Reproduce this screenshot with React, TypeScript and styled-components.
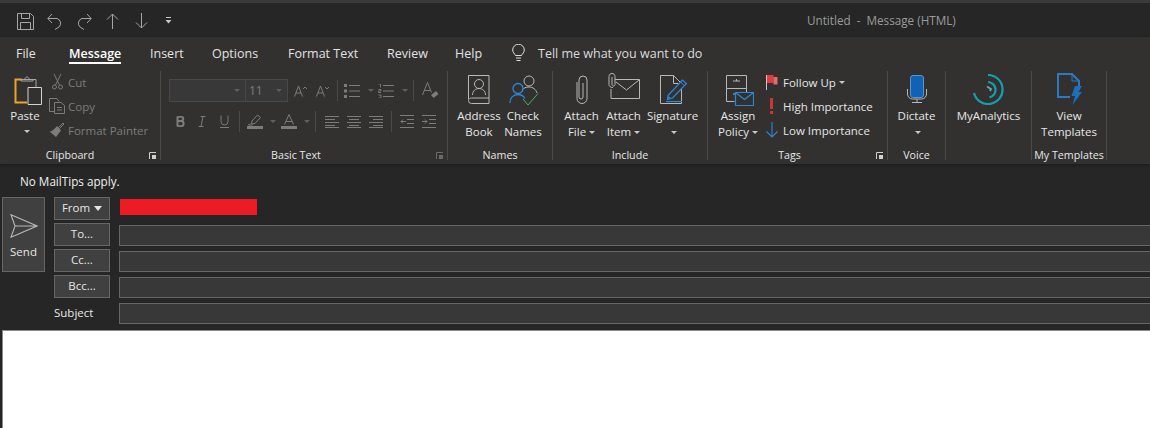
import React from "react";
import styled, { createGlobalStyle } from "styled-components";

const GlobalStyle = createGlobalStyle`
  html, body {
    margin: 0;
    padding: 0;
    height: 100%;
    overflow: hidden;
    background: #262626;
  }
  body {
    font-family: "Open Sans", "Noto Sans", "Liberation Sans", sans-serif;
    font-size: 11.5px;
    color: #e6e6e6;
  }
  * { box-sizing: border-box; }
`;

const stroke = "#b8b8b8";
const dim = "#7c7c7c";
const blue = "#2b88d8";

function Svg({ w, h, children }: { w: number; h: number; children: React.ReactNode }) {
  return (
    <svg width={w} height={h} viewBox={`0 0 ${w} ${h}`} fill="none" style={{ display: "block", flex: "none" }}>
      {children}
    </svg>
  );
}

const SaveIcon = () => (
  <Svg w={17} h={17}>
    <path d="M.5.5h13l3 3v13H.5z" stroke="#a6a6a6" />
    <path d="M4.500.5v5h8v-5M3.500 16.500v-7h10v7" stroke="#a6a6a6" />
  </Svg>
);
const UndoIcon = () => (
  <Svg w={16} h={17}>
    <path d="M1 5.500h9a5 5 0 0 1 2 8.500l-4 2.500" stroke="#a6a6a6" />
    <path d="M5 1 .8 5.500 5 10" stroke="#a6a6a6" />
  </Svg>
);
const RedoIcon = () => (
  <Svg w={16} h={17}>
    <path d="M15 5.500H6a5 5 0 0 0-2 8.500l4 2.500" stroke="#a6a6a6" />
    <path d="M11 1l4.200 4.500L11 10" stroke="#a6a6a6" />
  </Svg>
);
const UpIcon = () => (
  <Svg w={13} h={16}>
    <path d="M6.500 16V1M1 6.500 6.500 1 12 6.500" stroke="#a6a6a6" />
  </Svg>
);
const DownIcon = () => (
  <Svg w={13} h={16}>
    <path d="M6.500 0v15M1 9.500 6.500 15 12 9.500" stroke="#a6a6a6" />
  </Svg>
);
const CustomizeIcon = () => (
  <Svg w={7} h={8}>
    <path d="M1 .5h5" stroke="#c8c8c8" />
    <path d="M.5 3h6L3.500 6.500z" fill="#c8c8c8" />
  </Svg>
);
const BulbIcon = () => (
  <Svg w={13} h={18}>
    <path d="M3.500 11.500C2.500 9.500.7 8.500.7 6A5.800 5.800 0 0 1 12.300 6c0 2.500-1.800 3.500-2.800 5.500z" stroke="#e0e0e0" />
    <path d="M4 14h5M4.500 16.500h4" stroke="#e0e0e0" />
  </Svg>
);
const PasteIcon = () => (
  <Svg w={28} h={30}>
    <path d="M8 4.500H1.500v23H13" stroke="#eba428" strokeWidth="2" />
    <path d="M7 4.500h12v1.500H7zM10 4.500 13 1.500l3 3" stroke="#a6a6a6" />
    <path d="M19 4.500h3V12" stroke="#a6a6a6" />
    <path d="M14 12.500h13.500v17H14z" fill="#323130" stroke="#d2d2d2" />
  </Svg>
);
const CutIcon = () => (
  <Svg w={11} h={16}>
    <path d="M2 0l5.500 11M9 0 3.500 11" stroke={dim} />
    <circle cx="2.500" cy="13" r="2" stroke={dim} />
    <circle cx="8.500" cy="13" r="2" stroke={dim} />
  </Svg>
);
const CopyIcon = () => (
  <Svg w={16} h={16}>
    <path d="M5 13.500H.5V.5H8l2 3" stroke={dim} />
    <path d="M5.500 4.500H12l3.500 3v8h-10z" stroke={dim} />
    <path d="M8 9.500h5M8 12h5" stroke={dim} />
  </Svg>
);
const PainterIcon = () => (
  <Svg w={16} h={16}>
    <path d="M9.500 5.500 14 1l1 1-4.500 4.500z" stroke={dim} />
    <path d="M8 4 12 8.500 7 15 .5 9.500c2 0 5-2 7.500-5.500z" fill={dim} />
  </Svg>
);
const BoldIcon = () => (
  <Svg w={9} h={11}>
    <path d="M1.500.5v10M1.500.8H5c3 0 3 4 0 4.200H1.500M5 5c3.500 0 3.500 5.200 0 5.200H1.500" stroke={dim} strokeWidth="2" />
  </Svg>
);
const ItalicIcon = () => (
  <Svg w={8} h={11}>
    <path d="M5 .5 3 10.500M2.500.5h5M.5 10.500h5" stroke={dim} />
  </Svg>
);
const UnderlineIcon = () => (
  <Svg w={9} h={13}>
    <path d="M1 .5v6a3.500 3.500 0 0 0 7 0v-6M0 12.500h9" stroke={dim} />
  </Svg>
);
const HighlightIcon = () => (
  <Svg w={16} h={15}>
    <path d="M5 7 10.500 1l3 2.500L8 9.500l-3.500.5z" stroke={dim} />
    <path d="M3 9.500 1.500 11h4" stroke={dim} />
    <path d="M0 12h16v3H0z" fill={dim} />
  </Svg>
);
const FontColorIcon = () => (
  <Svg w={16} h={15}>
    <path d="M3.500 10.500 8 .5l4.500 10M5 7.500h6" stroke={dim} />
    <path d="M0 12h16v3H0z" fill={dim} />
  </Svg>
);
const GrowIcon = ({ down }: { down?: boolean }) => (
  <Svg w={14} h={12}>
    <path d="M.5 11.500 4.500 1l4 10.500M2 8h5" stroke={dim} />
    <path d={down ? "M9 2l2 2 2-2" : "M9 4l2-2 2 2"} stroke={dim} />
  </Svg>
);
const BulletsIcon = () => (
  <Svg w={16} h={14}>
    <path d="M0 0h3v3H0zM0 5.500h3v3H0zM0 11h3v3H0z" fill={dim} />
    <path d="M5 1.500h11M5 7h11M5 12.500h11" stroke={dim} />
  </Svg>
);
const NumberingIcon = () => (
  <Svg w={16} h={14}>
    <path d="M.5 0h2v3.500M.5 5.500h2.500v1.500H.5v1.500H3M.5 11H3v3H.5" stroke={dim} strokeWidth=".9" />
    <path d="M5 1.500h11M5 7h11M5 12.500h11" stroke={dim} />
  </Svg>
);
const ClearFormatIcon = () => (
  <Svg w={17} h={17}>
    <path d="M.5 13 5.500.5l4 10M2.500 8.500h5.500" stroke={dim} />
    <path d="M9 13l5-4 2.500 3-5 4z" fill={dim} />
  </Svg>
);
const AlignIcon = ({ align }: { align: "l" | "c" | "r" }) => {
  const short = align === "l" ? "M0 4.500h10M0 10.500h10" : align === "c" ? "M2 4.500h10M2 10.500h10" : "M4 4.500h10M4 10.500h10";
  return (
    <Svg w={14} h={13}>
      <path d={`M0 1.500h14M0 7.500h14M0 12.500h14${short}`} stroke={dim} />
    </Svg>
  );
};
const IndentIcon = ({ grow }: { grow?: boolean }) => (
  <Svg w={14} h={13}>
    <path d="M0 .5h14M0 12.500h14M7 4.500h7M7 8.500h7" stroke={dim} />
    <path d={grow ? "M0 6.500h5M3 4.500l2 2-2 2" : "M1 6.500h5M3 4.500l-2 2 2 2"} stroke={dim} />
  </Svg>
);
const BookIcon = () => (
  <Svg w={22} h={29}>
    <path d="M.5 24V.5h20.500v28H3.500a3 3 0 0 1-3-3c0-1.500 1.500-2.500 3-2.500H21" stroke={stroke} />
    <circle cx="11" cy="9" r="4.500" stroke={stroke} />
    <path d="M4.500 20c0-4 3-6.500 6.500-6.500s6.500 2.500 6.500 6.500" stroke={stroke} />
  </Svg>
);
const CheckNamesIcon = () => (
  <Svg w={30} h={31}>
    <circle cx="20" cy="6" r="5" stroke={stroke} />
    <path d="M13 15c1.500-2 4-3 7-3 4 0 7 2.500 8 6" stroke={stroke} />
    <circle cx="9" cy="13.500" r="5" stroke={blue} strokeWidth="1.300" />
    <path d="M.8 28c0-5 3.500-8.500 8.200-8.500 3 0 5.500 1.500 7 4" stroke={blue} strokeWidth="1.300" />
    <path d="M14 24l5 6L29 18.500" stroke="#4fae5b" />
  </Svg>
);
const ClipIcon = () => (
  <Svg w={12} h={29}>
    <path d="M1 7v16.500a5 5 0 0 0 10 0V5a4 4 0 0 0-8 0v17a2 2 0 0 0 4 0V8" stroke={stroke} />
  </Svg>
);
const AttachItemIcon = () => (
  <Svg w={32} h={26}>
    <path d="M7 6.500h24.500v19H3V16" stroke={stroke} />
    <path d="M8 9l10.500 8L31 7" stroke={stroke} />
    <path d="M5 14.500c-2.500 0-4-1-4-3V3.500C1 1.500 2.500.5 4 .5s3 1 3 3v8c0 2-3 2-3 0V4" stroke={stroke} />
  </Svg>
);
const SignatureIcon = () => (
  <Svg w={28} h={29}>
    <path d="M21.500 11v17.500H.5V.5h13l8 8M13.500.5v8h5" stroke={stroke} />
    <path d="M8 20.500 22.500 5l4 3.500L12.500 23l-5 1.500z" fill="#323130" stroke={blue} strokeWidth="1.200" />
    <path d="M20.500 7l4 3.500" stroke={blue} />
    <path d="M6 26.500h16" stroke={blue} strokeWidth="1.200" />
    <path d="M8 24l.5-3 2.500 2z" fill={blue} />
  </Svg>
);
const PolicyIcon = () => (
  <Svg w={28} h={31}>
    <path d="M.5.500h20v13H.5zM.5 13.500v13h8M20.500 13.500V17" stroke={stroke} />
    <path d="M7 6h7M10.500 4v2M7 19h3" stroke={stroke} />
    <path d="M9.500 17.500h18v13h-18z" fill="#323130" stroke={blue} strokeWidth="1.200" />
    <path d="M9.500 17.500l9 7 9-7" stroke={blue} strokeWidth="1.200" />
  </Svg>
);
const FlagIcon = () => (
  <Svg w={12} h={16}>
    <path d="M.5 1v15" stroke="#c8c8c8" />
    <path d="M1 1h6.500v8H1z" fill="#e23c40" />
    <path d="M7.500 3H11.500v7.500h-4z" fill="#e86a6d" />
  </Svg>
);
const HighIcon = () => (
  <Svg w={3} h={16}>
    <path d="M0 0h3v11H0zM0 13h3v3H0z" fill="#d13438" />
  </Svg>
);
const LowIcon = () => (
  <Svg w={12} h={16}>
    <path d="M6 0v15M.5 9.500 6 15l5.500-5.500" stroke={blue} strokeWidth="1.100" />
  </Svg>
);
const MicIcon = () => (
  <Svg w={20} h={28}>
    <rect x="3.500" y=".5" width="13" height="22" rx="2.500" fill="#0f62b4" stroke="#5a93cf" />
    <path d="M.5 14v5a5 5 0 0 0 5 5h9a5 5 0 0 0 5-5v-5M10 24v3.500M5 27.500h10" stroke={stroke} />
  </Svg>
);
const AnalyticsIcon = () => (
  <Svg w={31} h={31}>
    <path d="M15 1a14.500 14.500 0 1 1-14 18" stroke="#14a0ad" strokeWidth="2.200" />
    <path d="M15 8a7.800 7.800 0 0 1 1.500 15.400" stroke="#14a0ad" strokeWidth="2.200" />
    <path d="M14 12.500l4 2.500-1 2" stroke="#6fa6ac" strokeWidth="1.800" />
  </Svg>
);
const TemplatesIcon = () => (
  <Svg w={25} h={32}>
    <path d="M13 24H1V1h14l7 7v9" stroke="#2b79c2" strokeWidth="2" />
    <path d="M15 1v7h7" stroke="#2b79c2" />
    <path d="M18 13h7l-3.500 6h3.500L15.500 32l2.500-9h-3.500z" fill="#1c6fb8" />
  </Svg>
);
const LauncherIcon = ({ faded }: { faded?: boolean }) => (
  <Svg w={7} h={7}>
    <path d="M.5 7V.5H7" stroke={faded ? "#6a6a6a" : "#d0d0d0"} />
    <path d="M3 3h4v4H3z" fill={faded ? "#6a6a6a" : "#d0d0d0"} />
  </Svg>
);
const SendIcon = () => (
  <Svg w={28} h={24}>
    <path d="M1 .8 27 12 1 23.200 5 12zM5 12h22" stroke={stroke} strokeWidth="1.100" />
  </Svg>
);

const Page = styled.div`
  width: 1150px;
  height: 428px;
  overflow: hidden;
  display: flex;
  flex-direction: column;
  border-top: 3px solid #3a3a3a;
  background: #262626;
`;

const TitleBar = styled.div`
  height: 34px;
  flex: none;
  display: flex;
  align-items: center;
  padding: 2px 0 0 17px;
  background: #262626;
`;

const QatSlot = styled.div<{ $w: number }>`
  width: ${(p) => p.$w}px;
  flex: none;
  display: flex;
`;

const WindowTitle = styled.div`
  margin: -2px 0 0 635px;
  color: #9b9b9b;
  font-size: 11.7px;
  white-space: pre;
`;

const Ribbon = styled.div`
  height: 127px;
  flex: none;
  background: #323130;
  box-shadow: 0 1px 3px #1b1b1b;
  position: relative;
`;

const TabRow = styled.div`
  height: 34px;
  display: flex;
  align-items: flex-start;
  padding: 8px 0 0 16px;
  font-size: 12.5px;
`;

const Tab = styled.div<{ $w: number; $active?: boolean }>`
  width: ${(p) => p.$w}px;
  flex: none;
  height: 19px;
  line-height: 17px;
  white-space: nowrap;
  color: ${(p) => (p.$active ? "#ffffff" : "#e2e2e2")};
  font-weight: ${(p) => (p.$active ? 600 : 400)};
`;

const ActiveLabel = styled.span`
  display: inline-block;
  height: 19px;
  border-bottom: 2px solid #ffffff;
`;

const TellMe = styled.div`
  display: flex;
  align-items: center;
  gap: 13px;
  margin-top: -1px;
  color: #dcdcdc;
  white-space: nowrap;
`;

const Groups = styled.div`
  display: flex;
  height: 89px;
`;

const Group = styled.div<{ $w: number }>`
  width: ${(p) => p.$w}px;
  flex: none;
  position: relative;
  display: flex;
  flex-direction: column;
  border-right: 1px solid #4a4a4a;
`;

const GroupBody = styled.div<{ $pad?: number }>`
  height: 78px;
  flex: none;
  display: flex;
  padding-left: ${(p) => p.$pad ?? 0}px;
`;

const GroupLabel = styled.div<{ $shift?: number }>`
  flex: 1;
  text-align: center;
  font-size: 10.7px;
  line-height: 13px;
  color: #e6e6e6;
  white-space: nowrap;
  padding-right: ${(p) => p.$shift ?? 0}px;
`;

const Launcher = styled.div`
  position: absolute;
  right: 4px;
  bottom: 1px;
`;

const BigButton = styled.div<{ $w: number }>`
  width: ${(p) => p.$w}px;
  flex: none;
  display: flex;
  flex-direction: column;
  align-items: center;
  color: #e6e6e6;
  text-align: center;
  line-height: 16px;
  white-space: nowrap;
`;

const BigIcon = styled.div<{ $top?: number; $dx?: number }>`
  height: 37px;
  flex: none;
  padding-top: ${(p) => p.$top ?? 4}px;
  margin-left: ${(p) => p.$dx ?? 0}px;
`;

const Caret = styled.span<{ $faded?: boolean }>`
  display: inline-block;
  width: 0;
  height: 0;
  margin-left: 3px;
  vertical-align: 2px;
  border-left: 3px solid transparent;
  border-right: 3px solid transparent;
  border-top: 3px solid ${(p) => (p.$faded ? "#5f5f5f" : "#c8c8c8")};
`;

const CaretLine = styled.div`
  height: 16px;
  line-height: 14px;
`;

const SmallColumn = styled.div<{ $ml?: number }>`
  display: flex;
  flex-direction: column;
  margin-top: -1px;
  margin-left: ${(p) => p.$ml ?? 0}px;
`;

const SmallRow = styled.div<{ $disabled?: boolean; $icon: number; $gap: number }>`
  height: 24px;
  display: flex;
  align-items: center;
  white-space: nowrap;
  color: ${(p) => (p.$disabled ? "#7c7c7c" : "#e6e6e6")};

  > :first-child {
    width: ${(p) => p.$icon}px;
    margin-right: ${(p) => p.$gap}px;
    flex: none;
    display: flex;
    justify-content: center;
  }
`;

const ToolColumn = styled.div`
  display: flex;
  flex-direction: column;
  padding: 8px 0 0 8px;
`;

const ToolRow = styled.div<{ $mt?: number }>`
  display: flex;
  align-items: center;
  height: 23px;
  margin-top: ${(p) => p.$mt ?? 0}px;
`;

const FontBox = styled.div<{ $w: number }>`
  width: ${(p) => p.$w}px;
  height: 23px;
  flex: none;
  display: flex;
  align-items: center;
  justify-content: space-between;
  padding: 0 5px 0 3px;
  margin-right: -1px;
  border: 1px solid #484848;
  background: #383838;
  color: #7c7c7c;
  font-size: 12px;
`;

const Tool = styled.div<{ $w: number; $ml?: number }>`
  width: ${(p) => p.$w}px;
  margin-left: ${(p) => p.$ml ?? 0}px;
  flex: none;
  display: flex;
  align-items: center;
  justify-content: center;
`;

const ToolDivider = styled.div<{ $l: number; $r: number }>`
  width: 1px;
  height: 21px;
  flex: none;
  margin: 0 ${(p) => p.$r}px 0 ${(p) => p.$l}px;
  background: #4a4a4a;
`;

const Compose = styled.div`
  flex: 1;
  min-height: 0;
  display: flex;
  flex-direction: column;
  padding: 10px 0 0 2px;
`;

const MailTips = styled.div`
  height: 23px;
  padding-left: 18px;
  line-height: 15px;
  color: #f0f0f0;
  font-size: 11.7px;
`;

const Header = styled.div`
  display: flex;
  align-items: flex-start;
`;

const SendButton = styled.div`
  width: 43px;
  height: 75px;
  flex: none;
  display: flex;
  flex-direction: column;
  align-items: center;
  padding-top: 16px;
  gap: 6px;
  line-height: 16px;
  background: #404040;
  border: 1px solid #666666;
  color: #e6e6e6;
`;

const Fields = styled.div`
  flex: 1;
  margin-left: 9px;
  display: flex;
  flex-direction: column;
  gap: 3px;
`;

const FieldRow = styled.div`
  display: flex;
  align-items: flex-end;
  height: 23px;
`;

const SubjectRow = styled(FieldRow)`
  margin-top: 2px;
  height: 21px;
  align-items: center;
`;

const AddressButton = styled.div`
  width: 56px;
  height: 23px;
  flex: none;
  display: flex;
  align-items: center;
  justify-content: center;
  gap: 4px;
  padding-bottom: 2px;
  background: #404040;
  border: 1px solid #666666;
  color: #e6e6e6;
`;

const SubjectLabel = styled.div`
  width: 56px;
  flex: none;
  padding-bottom: 2px;
  color: #e6e6e6;
`;

const FieldInput = styled.div`
  width: 1040px;
  height: 21px;
  margin-left: 9px;
  flex: none;
  background: #383838;
  border: 1px solid #666666;
`;

const RedactedName = styled.div`
  width: 137px;
  height: 16px;
  margin: 0 0 5px 10px;
  background: #ed1c24;
`;

const FromCaret = styled.span`
  width: 0;
  height: 0;
  margin-top: 2px;
  border-left: 4px solid transparent;
  border-right: 4px solid transparent;
  border-top: 5px solid #e6e6e6;
`;

const MessageBody = styled.div`
  flex: 1;
  margin-top: 6px;
  background: #ffffff;
  border-top: 1px solid #8a8a8a;
  border-left: 1px solid #8a8a8a;
`;

export default function App() {
  return (
    <Page>
      <GlobalStyle />
      <TitleBar>
        <QatSlot $w={30}><SaveIcon /></QatSlot>
        <QatSlot $w={29}><UndoIcon /></QatSlot>
        <QatSlot $w={30}><RedoIcon /></QatSlot>
        <QatSlot $w={29}><UpIcon /></QatSlot>
        <QatSlot $w={30}><DownIcon /></QatSlot>
        <QatSlot $w={7}><CustomizeIcon /></QatSlot>
        <WindowTitle>Untitled  -  Message (HTML)</WindowTitle>
      </TitleBar>
      <Ribbon>
        <TabRow>
          <Tab $w={53}>File</Tab>
          <Tab $w={81} $active><ActiveLabel>Message</ActiveLabel></Tab>
          <Tab $w={62}>Insert</Tab>
          <Tab $w={76}>Options</Tab>
          <Tab $w={99}>Format Text</Tab>
          <Tab $w={68}>Review</Tab>
          <Tab $w={57}>Help</Tab>
          <TellMe><BulbIcon />Tell me what you want to do</TellMe>
        </TabRow>
        <Groups>
          <Group $w={161}>
            <GroupBody>
              <BigButton $w={50}>
                <BigIcon $dx={5}><PasteIcon /></BigIcon>
                <div>Paste</div>
                <CaretLine><Caret /></CaretLine>
              </BigButton>
              <SmallColumn $ml={-2}>
                <SmallRow $disabled $icon={18} $gap={2}><span><CutIcon /></span>Cut</SmallRow>
                <SmallRow $disabled $icon={18} $gap={2}><span><CopyIcon /></span>Copy</SmallRow>
                <SmallRow $disabled $icon={18} $gap={2}><span><PainterIcon /></span>Format Painter</SmallRow>
              </SmallColumn>
            </GroupBody>
            <GroupLabel $shift={20}>Clipboard</GroupLabel>
            <Launcher><LauncherIcon /></Launcher>
          </Group>
          <Group $w={287}>
            <GroupBody>
              <ToolColumn>
                <ToolRow>
                  <FontBox $w={77}><span /><Caret $faded /></FontBox>
                  <FontBox $w={43}>11<Caret $faded /></FontBox>
                  <Tool $w={22} $ml={3}><GrowIcon /></Tool>
                  <Tool $w={22}><GrowIcon down /></Tool>
                  <ToolDivider $l={3} $r={2} />
                  <Tool $w={24}><BulletsIcon /></Tool>
                  <Tool $w={10}><Caret $faded /></Tool>
                  <Tool $w={24}><NumberingIcon /></Tool>
                  <Tool $w={10}><Caret $faded /></Tool>
                  <ToolDivider $l={5} $r={4} />
                  <Tool $w={24}><ClearFormatIcon /></Tool>
                </ToolRow>
                <ToolRow $mt={8}>
                  <Tool $w={22}><BoldIcon /></Tool>
                  <Tool $w={22}><ItalicIcon /></Tool>
                  <Tool $w={22}><UnderlineIcon /></Tool>
                  <ToolDivider $l={4} $r={4} />
                  <Tool $w={22}><HighlightIcon /></Tool>
                  <Tool $w={10}><Caret $faded /></Tool>
                  <Tool $w={22} $ml={2}><FontColorIcon /></Tool>
                  <Tool $w={10}><Caret $faded /></Tool>
                  <ToolDivider $l={5} $r={5} />
                  <Tool $w={22}><AlignIcon align="l" /></Tool>
                  <Tool $w={22}><AlignIcon align="c" /></Tool>
                  <Tool $w={22}><AlignIcon align="r" /></Tool>
                  <ToolDivider $l={4} $r={4} />
                  <Tool $w={22}><IndentIcon /></Tool>
                  <Tool $w={22}><IndentIcon grow /></Tool>
                </ToolRow>
              </ToolColumn>
            </GroupBody>
            <GroupLabel $shift={16}>Basic Text</GroupLabel>
            <Launcher><LauncherIcon faded /></Launcher>
          </Group>
          <Group $w={105}>
            <GroupBody $pad={9}>
              <BigButton $w={44}>
                <BigIcon><BookIcon /></BigIcon>
                <div>Address<br />Book</div>
              </BigButton>
              <BigButton $w={44}>
                <BigIcon $dx={1}><CheckNamesIcon /></BigIcon>
                <div>Check<br />Names</div>
              </BigButton>
            </GroupBody>
            <GroupLabel>Names</GroupLabel>
          </Group>
          <Group $w={155}>
            <GroupBody $pad={7}>
              <BigButton $w={43}>
                <BigIcon><ClipIcon /></BigIcon>
                <div>Attach<br />File<Caret /></div>
              </BigButton>
              <BigButton $w={41}>
                <BigIcon $top={2}><AttachItemIcon /></BigIcon>
                <div>Attach<br />Item<Caret /></div>
              </BigButton>
              <BigButton $w={57}>
                <BigIcon $dx={3}><SignatureIcon /></BigIcon>
                <div>Signature<br /><Caret /></div>
              </BigButton>
            </GroupBody>
            <GroupLabel>Include</GroupLabel>
          </Group>
          <Group $w={180}>
            <GroupBody $pad={8}>
              <BigButton $w={44}>
                <BigIcon $dx={3}><PolicyIcon /></BigIcon>
                <div>Assign<br />Policy<Caret /></div>
              </BigButton>
              <SmallColumn $ml={3}>
                <SmallRow $icon={17} $gap={3}><span><FlagIcon /></span>Follow Up<Caret /></SmallRow>
                <SmallRow $icon={17} $gap={3}><span><HighIcon /></span>High Importance</SmallRow>
                <SmallRow $icon={17} $gap={3}><span><LowIcon /></span>Low Importance</SmallRow>
              </SmallColumn>
            </GroupBody>
            <GroupLabel $shift={16}>Tags</GroupLabel>
            <Launcher><LauncherIcon /></Launcher>
          </Group>
          <Group $w={58}>
            <GroupBody>
              <BigButton $w={57}>
                <BigIcon><MicIcon /></BigIcon>
                <div>Dictate<br /><Caret /></div>
              </BigButton>
            </GroupBody>
            <GroupLabel>Voice</GroupLabel>
          </Group>
          <Group $w={86}>
            <GroupBody>
              <BigButton $w={85}>
                <BigIcon $top={3}><AnalyticsIcon /></BigIcon>
                <div>MyAnalytics</div>
              </BigButton>
            </GroupBody>
          </Group>
          <Group $w={75}>
            <GroupBody>
              <BigButton $w={74}>
                <BigIcon $top={2}><TemplatesIcon /></BigIcon>
                <div>View<br />Templates</div>
              </BigButton>
            </GroupBody>
            <GroupLabel>My Templates</GroupLabel>
          </Group>
        </Groups>
      </Ribbon>
      <Compose>
        <MailTips>No MailTips apply.</MailTips>
        <Header>
          <SendButton><SendIcon />Send</SendButton>
          <Fields>
            <FieldRow>
              <AddressButton>From <FromCaret /></AddressButton>
              <RedactedName />
            </FieldRow>
            <FieldRow><AddressButton>To...</AddressButton><FieldInput /></FieldRow>
            <FieldRow><AddressButton>Cc...</AddressButton><FieldInput /></FieldRow>
            <FieldRow><AddressButton>Bcc...</AddressButton><FieldInput /></FieldRow>
            <SubjectRow><SubjectLabel>Subject</SubjectLabel><FieldInput /></SubjectRow>
          </Fields>
        </Header>
        <MessageBody />
      </Compose>
    </Page>
  );
}
